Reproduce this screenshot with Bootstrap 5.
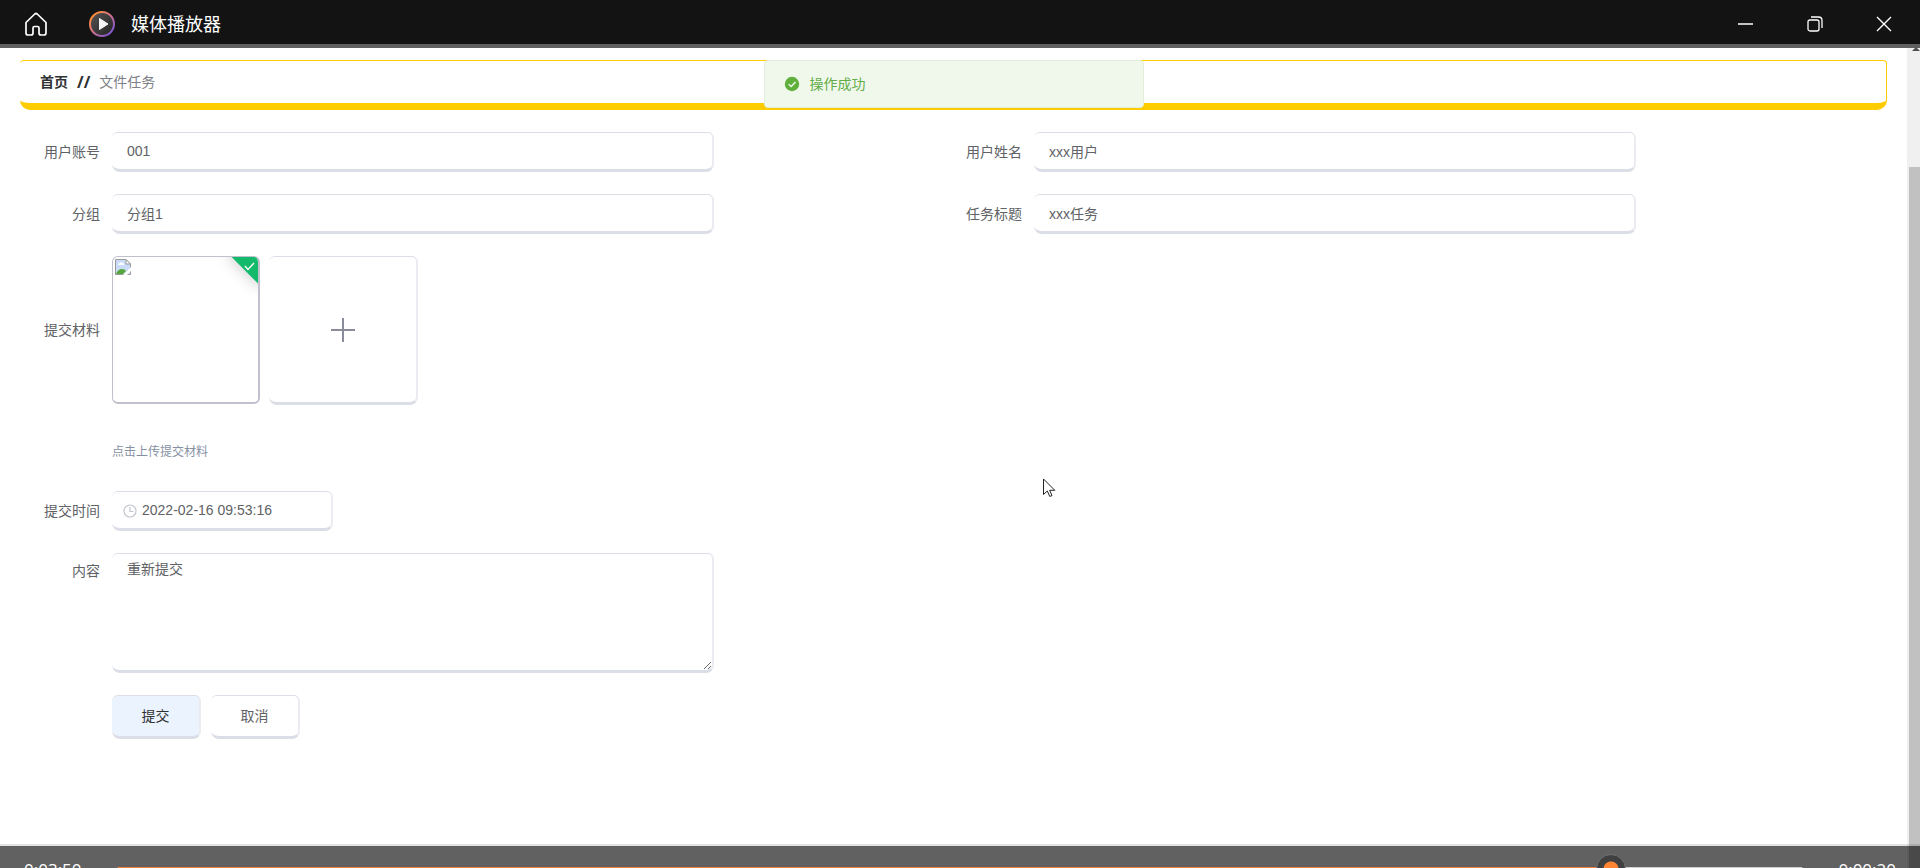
<!DOCTYPE html>
<html lang="zh-CN">
<head>
<meta charset="utf-8">
<meta name="viewport" content="width=device-width, initial-scale=1">
<title>媒体播放器</title>
<link href="https://cdn.jsdelivr.net/npm/bootstrap@5.3.0/dist/css/bootstrap.min.css" rel="stylesheet">
<style>
  :root { --line: #dcdee7; --ink: #606266; --gold: #ffcc00; }
  body { font-family: "Liberation Sans", "Noto Sans CJK SC", sans-serif; font-size: 14px; line-height: 20px; color: var(--ink); background: #fff; }
  svg { display: block; flex: none; }
  .titlebar { background: #131313; border-bottom: 4px solid #606060; height: 48px; padding: 4px 12px 0 24px; }
  .titlebar button, .titlebar a { background: none; border: 0; padding: 0; color: #fff; }
  .logo { margin-left: 41px; }
  .app-title { font-size: 18px; line-height: 24px; color: #fff; margin-left: 16px; padding-top: 2px; }
  .win-btns { gap: 21px; }
  .win-btns button { width: 48px; height: 40px; }
  .stage { min-height: 0; }
  .sheet { padding: 12px 20px 0; }
  .crumbs { height: 50px; padding: 0 20px 1px; border: 1px solid var(--gold); border-left: 0; border-bottom-width: 7px; border-radius: 4px 4px 10px 10px; }
  .crumbs a { color: #303133; font-weight: 700; text-decoration: none; }
  .crumbs .sep { margin: 0 9px; color: #303133; font: 700 16px/20px "Noto Sans", sans-serif; }
  .crumbs .here { color: #7d7f86; }
  .toast-ok { top: 12px; width: 380px; height: 48px; padding: 0 19px; gap: 10px; background: #f0f7eb; border: 1px solid #e1efd9; border-radius: 4px; color: #62ad48; }
  .sheet form { margin: 22px 23px 0 0; }
  .field { display: flex; margin-bottom: 22px; }
  .field > label, .field > .caption { width: 80px; margin-right: 12px; text-align: right; flex: none; line-height: 40px; }
  .field > .top-label { line-height: 36px; }
  .boxed { border: 1px solid var(--line); border-left: 0; border-right: 2px solid #ebecf2; border-bottom: 3px solid var(--line); border-radius: 6px 6px 8px 8px; background: #fff; color: var(--ink); }
  .boxed:focus { box-shadow: none; color: var(--ink); }
  .inp { max-width: 602px; height: 40px; padding: 0 15px; font-size: 14px; line-height: 20px; }
  textarea.inp { height: 120px; padding: 5px 15px; resize: vertical; }
  .when { width: 221px; }
  .when .inp { padding-left: 30px; }
  .when svg { left: 11px; top: 13px; }
  .tile { width: 148px; height: 148px; }
  button.tile { width: 149px; height: 149px; margin-left: 1px; }
  .tile-done { border: 1px solid #c0c1cd; border-right-width: 2px; border-bottom-width: 2px; border-radius: 6px; padding: 2px; }
  .corner { right: -19px; top: -9px; width: 46px; height: 26px; background: #13ba6b; transform: rotate(45deg); box-shadow: 0 0 16px 1px rgba(0,0,0,.2); }
  .tick { right: 3px; top: 5px; }
  .hint { font-size: 12px; line-height: 20px; color: #8690a3; margin-top: 37px; height: 27px; }
  .acts { gap: 10px; }
  .act { width: 89px; height: 44px; padding: 0; font-size: 14px; }
  .act.primary { background: #ebf3ff; color: #303133; }
  .rail { width: 13px; background: #f0f0f0; }
  .rail .up { margin: -1px 0 0 5px; }
  .rail .grip { margin: 116px 0 0 2px; background: #c1c1c1; }
  .player { height: 24px; background: rgba(0,0,0,.62); background-clip: padding-box; border-top: 2px solid rgba(0,0,0,.11); padding: 8px 24px 0; color: #fff; font: 17px/32px "Open Sans", sans-serif; overflow: hidden; }
  .player time { width: 60px; flex: none; }
  .player .left-time { text-align: right; }
  .seek { appearance: none; -webkit-appearance: none; background: none; height: 30px; margin: 0 33px; min-width: 0; }
  .seek::-webkit-slider-runnable-track { height: 4px; border-radius: 2px; background: linear-gradient(90deg, #f5833c 89%, #d0d0d0 89%); }
  .seek::-webkit-slider-thumb { -webkit-appearance: none; width: 30px; height: 30px; margin-top: -13px; border-radius: 50%; border: 1px solid #707070; background: radial-gradient(circle, #ff8533 0 7px, #404040 8px); }
  .cursor { left: 1043px; top: 430px; pointer-events: none; }
</style>
</head>
<body class="vh-100 overflow-hidden d-flex flex-column">
<header class="titlebar d-flex align-items-center flex-shrink-0">
  <a href="#" aria-label="主页"><svg width="24" height="26" viewBox="0 0 24 26" fill="none" stroke="#fff" stroke-width="1.7" stroke-linejoin="round"><path d="M2 11.5 10.8 3Q12 2 13.200 3L22 11.500V22Q22 24 20 24H17Q15 24 15 22V17Q15 15.500 13.500 15.500H10.500Q9 15.500 9 17V22Q9 24 7 24H4Q2 24 2 22Z"/></svg></a>
  <svg class="logo" width="26" height="26" viewBox="0 0 26 26"><defs><linearGradient id="ring" x1="0" y1="0" x2="1" y2="1"><stop offset=".15" stop-color="#ff8b3d"/><stop offset=".5" stop-color="#cf6f8f"/><stop offset=".9" stop-color="#7a55d0"/></linearGradient><linearGradient id="disc" x1="0" y1="0" x2="1" y2="1"><stop stop-color="#555"/><stop offset="1" stop-color="#222"/></linearGradient></defs><circle cx="13" cy="13" r="12" fill="url(#disc)" stroke="url(#ring)" stroke-width="2"/><path d="M10.500 7.500 19 13 10.500 18.500Z" fill="#f5f5f5" stroke="#f5f5f5" stroke-linejoin="round"/></svg>
  <span class="app-title">媒体播放器</span>
  <div class="win-btns d-flex ms-auto">
    <button type="button" class="d-flex align-items-center justify-content-center" aria-label="最小化"><svg width="16" height="16" stroke="#fff" stroke-width="1.500"><path d="M0 8H15"/></svg></button>
    <button type="button" class="d-flex align-items-center justify-content-center" aria-label="还原"><svg width="16" height="16" fill="none" stroke="#fff" stroke-width="1.300"><rect x="1" y="4" width="11" height="11" rx="2"/><path d="M4 1H11.500Q15 1 15 4.500V12"/></svg></button>
    <button type="button" class="d-flex align-items-center justify-content-center" aria-label="关闭"><svg width="16" height="16" stroke="#fff" stroke-width="1.400"><path d="M1 1 15 15M15 1 1 15"/></svg></button>
  </div>
</header>
<div class="stage flex-grow-1 d-flex position-relative">
  <main class="sheet flex-grow-1 position-relative">
    <nav class="crumbs d-flex align-items-center" aria-label="导航"><a href="#">首页</a><span class="sep">//</span><span class="here">文件任务</span></nav>
    <div class="toast-ok position-absolute start-50 translate-middle-x d-flex align-items-center" role="status">
      <svg width="16" height="16" viewBox="0 0 16 16"><circle cx="8" cy="8" r="7.200" fill="#60b03c"/><path d="M4.700 8.200 7.200 10.500 11.500 6" fill="none" stroke="#f0f7eb" stroke-width="1.500"/></svg>
      <span>操作成功</span>
    </div>
    <form>
      <div class="row g-0">
        <div class="col-6 field"><label for="account">用户账号</label><input id="account" class="form-control boxed inp" value="001"></div>
        <div class="col-6 field"><label for="name">用户姓名</label><input id="name" class="form-control boxed inp" value="xxx用户"></div>
        <div class="col-6 field"><label for="group">分组</label><input id="group" class="form-control boxed inp" value="分组1"></div>
        <div class="col-6 field"><label for="subject">任务标题</label><input id="subject" class="form-control boxed inp" value="xxx任务"></div>
      </div>
      <div class="field">
        <span class="caption tile d-flex align-items-center justify-content-end">提交材料</span>
        <div>
          <div class="d-flex gap-2">
            <div class="tile tile-done position-relative overflow-hidden">
              <svg width="16" height="16" viewBox="0 0 16 16"><path d="M.5.5H11L15.500 5V15.500H.5Z" fill="#c9dcf7" stroke="#9a9a9a"/><path d="M11 .5V5H15.500Z" fill="#fff" stroke="#9a9a9a"/><path d="M3 6Q3 4 5 4 6 2.500 8 4 9.500 4.500 9 6Z" fill="#fff"/><path d="M1 15Q3 10 7 10 10 10 11 12L8 15Z" fill="#57a53d"/><path d="M8 16 16 8V12L12 16Z" fill="#fff"/></svg>
              <span class="corner position-absolute"></span>
              <svg class="tick position-absolute" width="11" height="9" fill="none" stroke="#fff" stroke-width="1.300"><path d="M1 4 4 7.500 10 1"/></svg>
            </div>
            <button type="button" class="tile boxed d-flex align-items-center justify-content-center p-0" aria-label="上传"><svg width="24" height="24" stroke="#8a8c9b" stroke-width="2"><path d="M0 12H24M12 0V24"/></svg></button>
          </div>
          <div class="hint">点击上传提交材料</div>
        </div>
      </div>
      <div class="field"><label for="when">提交时间</label><div class="when position-relative"><input id="when" class="form-control boxed inp" value="2022-02-16 09:53:16"><svg class="position-absolute" width="14" height="14" fill="none" stroke="#c3c6ce" stroke-width="1.200"><circle cx="7" cy="7" r="6"/><path d="M7 3V7.500H10.500"/></svg></div></div>
      <div class="field"><label class="top-label" for="body">内容</label><textarea id="body" class="form-control boxed inp">重新提交</textarea></div>
      <div class="field"><span class="caption"></span><div class="acts d-flex"><button type="button" class="act primary boxed">提交</button><button type="button" class="act boxed">取消</button></div></div>
    </form>
  </main>
  <div class="rail d-flex flex-column flex-shrink-0" aria-hidden="true">
    <svg class="up" width="8" height="4"><path d="M0 4 4 0 8 4Z" fill="#505050"/></svg>
    <div class="grip flex-grow-1"></div>
  </div>
  <svg class="cursor position-absolute" width="13" height="20" viewBox="0 0 13 20"><path d="M.5 1V16.500L4.300 13 6.800 18.500 9 17.500 6.600 12.300H11.800Z" fill="#fff" stroke="#222"/></svg>
  <footer class="player position-absolute bottom-0 start-0 end-0 d-flex align-items-start">
    <time>0:03:50</time>
    <input type="range" class="seek flex-grow-1" min="0" max="1000" value="893" aria-label="播放进度">
    <time class="left-time">0:00:20</time>
  </footer>
</div>
<script src="https://cdn.jsdelivr.net/npm/bootstrap@5.3.0/dist/js/bootstrap.bundle.min.js"></script>
</body>
</html>
